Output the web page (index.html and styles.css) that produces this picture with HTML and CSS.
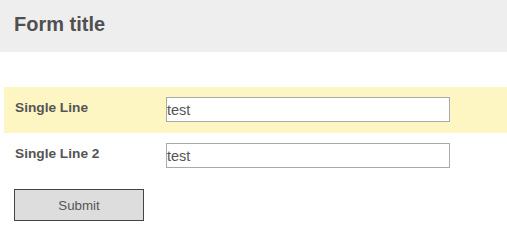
FILE: index.html
```html
<!DOCTYPE html>
<html lang="en">
<head>
    <meta charset="UTF-8">
    <meta name="viewport" content="width=device-width, initial-scale=1.0">
    <title>Form</title>
    <link rel="stylesheet" href="styles.css">
</head>
<body>

    <div class="form-header">
        <h2>Form title</h2>
    </div>

    <form class="form-body">
        <div class="form-row highlight">
            <label for="single1">Single Line</label>
            <input type="text" id="single1" value="test">
        </div>
        <div class="form-row">
            <label for="single2">Single Line 2</label>
            <input type="text" id="single2" value="test">
        </div>
        <button type="button" class="submit-btn">Submit</button>
    </form>

</body>
</html>
```

FILE: styles.css
```css
body {
    margin: 0;
    font-family: "Liberation Sans", Arial, sans-serif;
    color: #555;
    background: #fff;
}

.form-header {
    height: 52px;
    background-color: #eeeeee;
    padding: 0 14px;
    display: flex;
    align-items: center;
}

.form-header h2 {
    margin: 0;
    font-size: 20px;
    font-weight: bold;
    color: #505050;
    position: relative;
    top: -2px;
}

.form-body {
    margin: 35px 0 0 4px;
}

.form-row {
    display: flex;
    align-items: flex-start;
    padding: 10px 10px 11px 10px;
}

.form-row.highlight {
    background-color: #fdf6c3;
}

.form-row label {
    box-sizing: border-box;
    width: 152px;
    flex-shrink: 0;
    font-size: 13.7px;
    font-weight: bold;
    color: #555;
    padding-top: 3px;
    padding-left: 1px;
}

.form-row input {
    box-sizing: border-box;
    width: 284px;
    height: 25px;
    margin: 0;
    padding: 0;
    border: 1px solid #a9a9a9;
    background: #fff;
    font-family: "Liberation Sans", Arial, sans-serif;
    font-size: 14.5px;
    color: #555;
    outline: none;
}

.submit-btn {
    box-sizing: border-box;
    width: 130px;
    height: 32px;
    margin: 10px 0 0 10px;
    padding: 0;
    border: 1px solid #444;
    background-color: #dddddd;
    font-family: "Liberation Sans", Arial, sans-serif;
    font-size: 13.33px;
    color: #555;
    cursor: pointer;
}
```
